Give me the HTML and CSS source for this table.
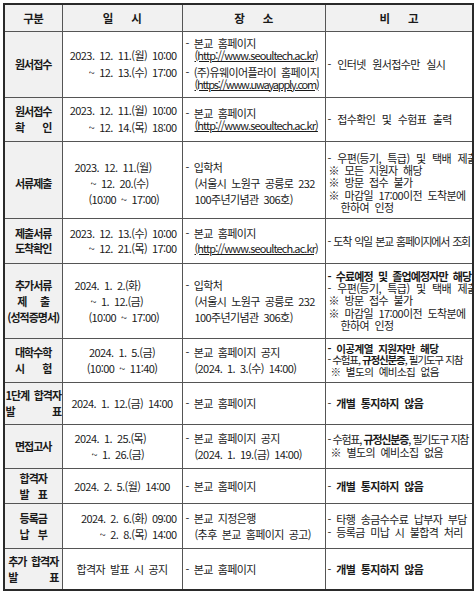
FILE: index.html
```html
<!DOCTYPE html>
<html lang="ko">
<head>
<meta charset="utf-8">
<title>전형일정</title>
<link rel="stylesheet" href="styles.css">
</head>
<body>
<div class="sheet">
<table class="sched">
<colgroup><col class="c1"><col class="c2"><col class="c3"><col class="c4"></colgroup>
<thead>
<tr class="h-head">
<th>구분</th>
<th class="wide">일 시</th>
<th class="wide">장 소</th>
<th class="wide">비 고</th>
</tr>
</thead>
<tbody>
<tr class="h66">
<td class="lbl"><div class="box"><div>원서접수</div></div></td>
<td class="dt dt-r lh17"><div>2023. 12. 11.(월) 10:00</div><div>~ 12. 13.(수) 17:00</div></td>
<td class="pl"><div class="para"><div>- 본교 홈페이지</div><div class="cont url">(http://www.seoultech.ac.kr)</div></div><div class="para"><div>- (주)유웨이어플라이 홈페이지</div><div class="cont url url2">(https://www.uwayapply.com)</div></div></td>
<td class="nt"><div class="sp5">- 인터넷 원서접수만 실시</div></td>
</tr>
<tr class="h44">
<td class="lbl"><div class="box"><div>원서접수</div><div class="spread"><span>확</span><span>인</span></div></div></td>
<td class="dt dt-r lh17"><div>2023. 12. 11.(월) 10:00</div><div>~ 12. 14.(목) 18:00</div></td>
<td class="pl lh12"><div>- 본교 홈페이지</div><div class="cont url">(http://www.seoultech.ac.kr)</div></td>
<td class="nt"><div class="sp5">- 접수확인 및 수험표 출력</div></td>
</tr>
<tr class="h77 low">
<td class="lbl"><div class="box"><div>서류제출</div></div></td>
<td class="dt dt-l lh16"><div>2023. 12. 11.(월)</div><div class="ind-a">~ 12. 20.(수)</div><div class="ind-b">(10:00 ~ 17:00)</div></td>
<td class="pl lh16"><div>- 입학처</div><div class="cont">(서울시 노원구 공릉로 232</div><div class="cont">100주년기념관 306호)</div></td>
<td class="nt lh125"><div class="sp5">- 우편(등기, 특급) 및 택배 제출</div><div class="ref">※ 모든 지원자 해당</div><div class="ref">※ 방문 접수 불가</div><div class="ref">※ 마감일 17:00이전 도착분에</div><div class="cont4">한하여 인정</div></td>
</tr>
<tr class="h45">
<td class="lbl"><div class="box lh15"><div>제출서류</div><div>도착확인</div></div></td>
<td class="dt dt-r lh15"><div>2023. 12. 13.(수) 10:00</div><div>~ 12. 21.(목) 17:00</div></td>
<td class="pl lh15"><div>- 본교 홈페이지</div><div class="cont url">(http://www.seoultech.ac.kr)</div></td>
<td class="nt"><div class="tight">- 도착 익일 본교 홈페이지에서 조회</div></td>
</tr>
<tr class="h75">
<td class="lbl"><div class="box"><div>추가서류</div><div class="spread inset"><span>제</span><span>출</span></div><div>(성적증명서)</div></div></td>
<td class="dt dt-l lh16"><div>2024. 1. 2.(화)</div><div class="ind-a">~ 1. 12.(금)</div><div class="ind-b">(10:00 ~ 17:00)</div></td>
<td class="pl lh16"><div>- 입학처</div><div class="cont">(서울시 노원구 공릉로 232</div><div class="cont">100주년기념관 306호)</div></td>
<td class="nt lh125"><div class="boldline"><b>- 수료예정 및 졸업예정자만 해당</b></div><div class="sp5">- 우편(등기, 특급) 및 택배 제출</div><div class="ref">※ 방문 접수 불가</div><div class="ref">※ 마감일 17:00이전 도착분에</div><div class="cont4">한하여 인정</div></td>
</tr>
<tr class="h44">
<td class="lbl"><div class="box"><div>대학수학</div><div class="spread"><span>시</span><span>험</span></div></div></td>
<td class="dt dt-c lh16"><div>2024. 1. 5.(금)</div><div>(10:00 ~ 11:40)</div></td>
<td class="pl lh16"><div>- 본교 홈페이지 공지</div><div class="cont">(2024. 1. 3.(수) 14:00)</div></td>
<td class="nt small lh11"><div class="sp3"><b>- 이공계열 지원자만 해당</b></div><div class="tight2">- 수험표, <b>규정신분증</b>, 필기도구 지참</div><div class="ref2">※ 별도의 예비소집 없음</div></td>
</tr>
<tr class="h42">
<td class="lbl"><div class="box"><div>1단계 합격자</div><div class="spread"><span>발</span><span>표</span></div></div></td>
<td class="dt dt-c"><div>2024. 1. 12.(금) 14:00</div></td>
<td class="pl"><div>- 본교 홈페이지</div></td>
<td class="nt"><div class="sp3">- <b>개별 통지하지 않음</b></div></td>
</tr>
<tr class="h44">
<td class="lbl"><div class="box"><div>면접고사</div></div></td>
<td class="dt dt-l lh16"><div>2024. 1. 25.(목)</div><div class="ind-c">~ 1. 26.(금)</div></td>
<td class="pl lh16"><div>- 본교 홈페이지 공지</div><div class="cont">(2024. 1. 19.(금) 14:00)</div></td>
<td class="nt lh14"><div class="tight2">- 수험표, <b>규정신분증</b>, 필기도구 지참</div><div class="ref2">※ 별도의 예비소집 없음</div></td>
</tr>
<tr class="h35">
<td class="lbl"><div class="box"><div>합격자</div><div class="spread"><span>발</span><span>표</span></div></div></td>
<td class="dt dt-c"><div>2024. 2. 5.(월) 14:00</div></td>
<td class="pl"><div>- 본교 홈페이지</div></td>
<td class="nt"><div class="sp3">- <b>개별 통지하지 않음</b></div></td>
</tr>
<tr class="h45">
<td class="lbl"><div class="box"><div>등록금</div><div class="spread"><span>납</span><span>부</span></div></div></td>
<td class="dt dt-r lh16"><div>2024. 2. 6.(화) 09:00</div><div>~ 2. 8.(목) 14:00</div></td>
<td class="pl lh16"><div>- 본교 지정은행</div><div class="cont">(추후 본교 홈페이지 공고)</div></td>
<td class="nt lh13"><div class="sp3">- 타행 송금수수료 납부자 부담</div><div class="sp3">- 등록금 미납 시 불합격 처리</div></td>
</tr>
<tr class="h42">
<td class="lbl"><div class="box"><div>추가 합격자</div><div class="spread"><span>발</span><span>표</span></div></div></td>
<td class="dt dt-c"><div>합격자 발표 시 공지</div></td>
<td class="pl"><div>- 본교 홈페이지</div></td>
<td class="nt"><div class="sp3">- <b>개별 통지하지 않음</b></div></td>
</tr>
</tbody>
</table>
</div>
</body>
</html>
```

FILE: styles.css
```css
* { box-sizing: border-box; }
html, body { margin: 0; padding: 0; background: #fff; }
body {
  font-family: "Noto Sans CJK KR", "Noto Sans", sans-serif;
  font-size: 11px;
  color: #1a1a1a;
}
.sheet { padding: 3px 0 0 3px; }
.sched {
  border-collapse: collapse;
  table-layout: fixed;
  width: 469px;
  border: 2px solid #2a2a2a;
}
.c1 { width: 58px; }
.c2 { width: 120px; }
.c3 { width: 143px; }
.c4 { width: 148px; }
th, td {
  border: 1px solid #555;
  padding: 0;
  vertical-align: middle;
  white-space: nowrap;
  overflow: hidden;
  letter-spacing: -0.6px;
  word-spacing: 2.5px;
  line-height: 12px;
}
th {
  background: #f1f1f1;
  font-weight: 700;
  font-size: 11.5px;
  text-align: center;
}
.h-head { height: 27px; }
.h66 { height: 66px; }
.h44 { height: 44px; }
.h77 { height: 77px; }
.h45 { height: 45px; }
.h75 { height: 75px; }
.h42 { height: 42px; }
.h35 { height: 35px; }
.low > td { padding-top: 6px; }
.wide { word-spacing: 16px; }
.lbl {
  background: #f1f1f1;
  text-align: center;
  font-weight: 700;
  letter-spacing: -1px;
}
.lbl .box { display: inline-block; line-height: 16px; text-align: center; }
.lbl .box.lh15 { line-height: 15px; }
.spread { display: flex; justify-content: space-between; }
.spread.inset { margin: 0 10px; }
.dt { line-height: 16px; }
.dt-r { text-align: right; padding-right: 5px; }
.dt-l { text-align: left; padding-left: 12px; }
.dt-c { text-align: center; }
.ind-a { margin-left: 16px; }
.ind-b { margin-left: 14px; }
.ind-c { margin-left: 17px; }
.lh17 { line-height: 17px; }
.lh16 { line-height: 16px; }
.lh15 { line-height: 15px; }
.lh14 { line-height: 13.5px; }
.lh13 { line-height: 13px; }
.lh125 { line-height: 12.3px; }
.lh12 { line-height: 12px; }
.lh11 { line-height: 11.3px; }
.pl { padding-left: 3px; }
.para { line-height: 11.5px; }
.para + .para { margin-top: 6px; }
.cont { padding-left: 9px; }
.url { text-decoration: underline; letter-spacing: -0.9px; word-spacing: 0; }
.url2 { letter-spacing: -1.2px; }
.nt { padding-left: 2px; }
.small { font-size: 10.6px; }
.sp5 { word-spacing: 4px; }
.sp3 { word-spacing: 3px; }
.boldline { letter-spacing: -0.9px; word-spacing: 3px; }
.tight { letter-spacing: -1.3px; word-spacing: 1.5px; }
.tight2 { letter-spacing: -1.2px; word-spacing: 0.5px; }
.ref { padding-left: 1px; word-spacing: 3px; }
.ref2 { padding-left: 3px; word-spacing: 3px; }
.cont4 { padding-left: 13px; word-spacing: 3px; }
b { font-weight: 700; }
```
